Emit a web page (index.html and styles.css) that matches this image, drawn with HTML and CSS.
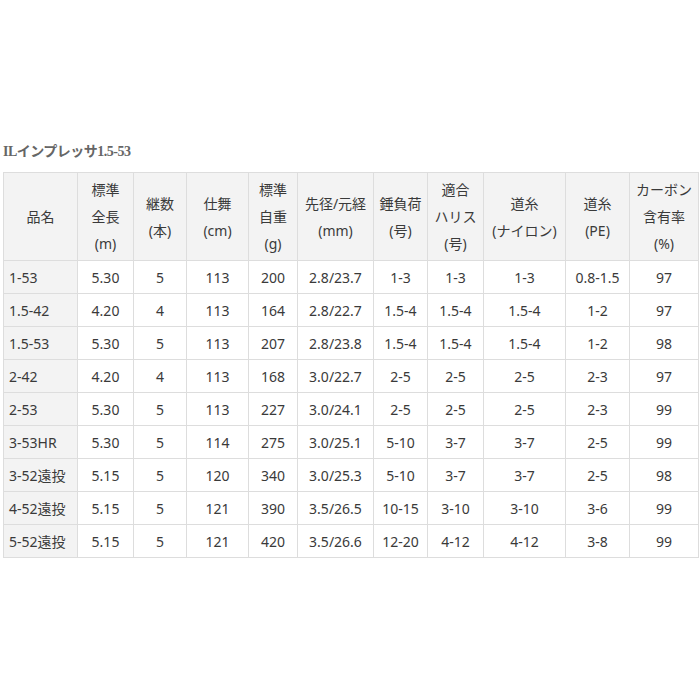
FILE: index.html
```html
<!DOCTYPE html>
<html lang="ja">
<head>
<meta charset="utf-8">
<link rel="stylesheet" href="styles.css">
</head>
<body>
<div class="page">
  <h2 class="title">ILインプレッサ1.5-53</h2>
  <table class="spec">
    <colgroup>
      <col class="c1"><col class="c2"><col class="c3"><col class="c4"><col class="c5"><col class="c6"><col class="c7"><col class="c8"><col class="c9"><col class="c10"><col class="c11">
    </colgroup>
    <thead>
      <tr>
        <th>品名</th>
        <th>標準<br>全長<br>(m)</th>
        <th>継数<br>(本)</th>
        <th>仕舞<br>(cm)</th>
        <th>標準<br>自重<br>(g)</th>
        <th>先径/元経<br>(mm)</th>
        <th>錘負荷<br>(号)</th>
        <th>適合<br>ハリス<br>(号)</th>
        <th>道糸<br>(ナイロン)</th>
        <th>道糸<br>(PE)</th>
        <th>カーボン<br>含有率<br>(%)</th>
      </tr>
    </thead>
    <tbody>
      <tr><th>1-53</th><td>5.30</td><td>5</td><td>113</td><td>200</td><td>2.8/23.7</td><td>1-3</td><td>1-3</td><td>1-3</td><td>0.8-1.5</td><td>97</td></tr>
      <tr><th>1.5-42</th><td>4.20</td><td>4</td><td>113</td><td>164</td><td>2.8/22.7</td><td>1.5-4</td><td>1.5-4</td><td>1.5-4</td><td>1-2</td><td>97</td></tr>
      <tr><th>1.5-53</th><td>5.30</td><td>5</td><td>113</td><td>207</td><td>2.8/23.8</td><td>1.5-4</td><td>1.5-4</td><td>1.5-4</td><td>1-2</td><td>98</td></tr>
      <tr><th>2-42</th><td>4.20</td><td>4</td><td>113</td><td>168</td><td>3.0/22.7</td><td>2-5</td><td>2-5</td><td>2-5</td><td>2-3</td><td>97</td></tr>
      <tr><th>2-53</th><td>5.30</td><td>5</td><td>113</td><td>227</td><td>3.0/24.1</td><td>2-5</td><td>2-5</td><td>2-5</td><td>2-3</td><td>99</td></tr>
      <tr><th>3-53HR</th><td>5.30</td><td>5</td><td>114</td><td>275</td><td>3.0/25.1</td><td>5-10</td><td>3-7</td><td>3-7</td><td>2-5</td><td>99</td></tr>
      <tr><th>3-52遠投</th><td>5.15</td><td>5</td><td>120</td><td>340</td><td>3.0/25.3</td><td>5-10</td><td>3-7</td><td>3-7</td><td>2-5</td><td>98</td></tr>
      <tr><th>4-52遠投</th><td>5.15</td><td>5</td><td>121</td><td>390</td><td>3.5/26.5</td><td>10-15</td><td>3-10</td><td>3-10</td><td>3-6</td><td>99</td></tr>
      <tr><th>5-52遠投</th><td>5.15</td><td>5</td><td>121</td><td>420</td><td>3.5/26.6</td><td>12-20</td><td>4-12</td><td>4-12</td><td>3-8</td><td>99</td></tr>
    </tbody>
  </table>
</div>
</body>
</html>
```
FILE: styles.css
```css
html, body {
  margin: 0;
  padding: 0;
  background: #ffffff;
}

.page {
  padding: 142px 2px 0 3px;
}

.title {
  margin: 0 0 10px 0;
  height: 20px;
  font-family: "Liberation Serif", "Noto Sans CJK JP", serif;
  font-size: 14px;
  line-height: 20px;
  font-weight: bold;
  letter-spacing: -0.5px;
  color: #666666;
}

.spec {
  border-collapse: collapse;
  table-layout: fixed;
  width: 695px;
  font-family: "Noto Sans", "Noto Sans CJK JP", sans-serif;
  font-size: 14px;
  color: #3a3a3a;
}

.c1 { width: 74px; }
.c2 { width: 56px; }
.c3 { width: 53px; }
.c4 { width: 62px; }
.c5 { width: 49px; }
.c6 { width: 76px; }
.c7 { width: 54px; }
.c8 { width: 56px; }
.c9 { width: 82px; }
.c10 { width: 64px; }
.c11 { width: 69px; }

.spec th,
.spec td {
  border: 1px solid #dddddd;
  padding: 0;
  font-weight: normal;
  vertical-align: middle;
  white-space: nowrap;
  overflow: hidden;
}

.spec thead th {
  background: #f3f3f3;
  height: 87px;
  line-height: 27px;
  text-align: center;
}

.spec tbody th {
  background: #f3f3f3;
  text-align: left;
  padding-left: 5px;
}

.spec tbody td {
  text-align: center;
}

.spec tbody tr {
  height: 33px;
}
```
